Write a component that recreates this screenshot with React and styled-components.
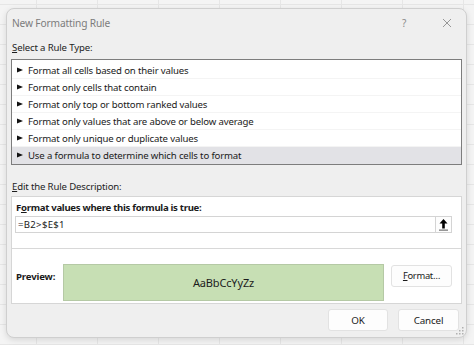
import React from "react";
import styled, { createGlobalStyle } from "styled-components";

const Global = createGlobalStyle`
  html, body { margin: 0; padding: 0; }
  body {
    width: 474px;
    height: 345px;
    overflow: hidden;
    font-family: "Noto Sans", "Open Sans", sans-serif;
    background-color: #f4f4f4;
    background-image:
      linear-gradient(to right, #e6e6e6 1px, transparent 1px),
      linear-gradient(to bottom, #e6e6e6 1px, transparent 1px);
    background-size: 61px 100%, 100% 20px;
    background-position: 36px 0, 0 4px;
  }
`;

const Dialog = styled.div`
  box-sizing: border-box;
  margin: 8px 0 0 6px;
  width: 461px;
  height: 330px;
  background: #efefef;
  border: 1px solid #cfcfcf;
  border-radius: 8px;
  box-shadow: 0 2px 6px rgba(0,0,0,0.12);
  padding: 0 4px 0 4px;
  display: flex;
  flex-direction: column;
  position: relative;
  letter-spacing: -0.15px;
`;

const TitleBar = styled.div`
  height: 30px;
  display: flex;
  align-items: center;
  padding-left: 1px;
  font-size: 10.2px;
  color: #7c7c7c;
`;

const Title = styled.div`
  flex: 1;
  padding-bottom: 3px;
`;

const TitleButton = styled.div`
  width: ${p => p.$w}px;
  margin-right: ${p => p.$mr || 0}px;
  padding-bottom: 3px;
  display: flex;
  justify-content: center;
  color: #8a8a8a;
  font-size: 10px;
`;

const SectionLabel = styled.div`
  height: 17px;
  line-height: 17px;
  font-size: 9.6px;
  color: #1e1e1e;
  padding-left: 1px;
  margin-top: ${p => p.$mt || 0}px;
  margin-bottom: ${p => p.$mb || 0}px;
  u { text-decoration: underline; text-underline-offset: 1px; }
`;

const ListBox = styled.div`
  box-sizing: border-box;
  height: 106px;
  background: #ffffff;
  border: 1px solid #7d7d7d;
  padding-top: 2px;
  display: flex;
  flex-direction: column;
`;

const RuleRow = styled.div`
  height: 17px;
  box-sizing: border-box;
  display: flex;
  align-items: center;
  padding-left: 5px;
  font-size: 9.6px;
  color: #1a1a1a;
  background: ${p => (p.$selected ? "#e2e2e6" : "transparent")};
  border-bottom: 1px solid ${p => (p.$selected ? "transparent" : "#f4f4f4")};
`;

const Marker = styled.svg`
  width: 6px;
  height: 6px;
  margin-right: 5px;
  flex: none;
`;

const DescPanel = styled.div`
  box-sizing: border-box;
  height: 108px;
  background: #ffffff;
  border: 1px solid #d6d6d6;
  display: flex;
  flex-direction: column;
`;

const FormulaBlock = styled.div`
  padding: 2px 9px 0 3px;
  height: 52px;
  border-bottom: 1px solid #d8d8d8;
  box-sizing: border-box;
`;

const BoldLabel = styled.div`
  font-size: 9.6px;
  font-weight: 700;
  color: #1a1a1a;
  height: 17px;
  line-height: 17px;
  padding-left: 1px;
  letter-spacing: -0.3px;
  u { text-decoration: underline; }
`;

const InputRow = styled.div`
  display: flex;
  height: 17px;
  box-sizing: border-box;
  border: 1px solid #d4d4d4;
  background: #fff;
`;

const FormulaInput = styled.div`
  flex: 1;
  font-size: 9.6px;
  line-height: 15px;
  padding-left: 2px;
  color: #1a1a1a;
  letter-spacing: 0.3px;
`;

const CollapseButton = styled.div`
  width: 15px;
  border-left: 1px solid #d4d4d4;
  display: flex;
  align-items: center;
  justify-content: center;
  background: #fdfdfd;
`;

const PreviewRow = styled.div`
  flex: 1;
  display: flex;
  align-items: center;
  padding: 0 9px 1px 4px;
`;

const PreviewLabel = styled.div`
  width: 47px;
  font-size: 9.6px;
  font-weight: 700;
  color: #1a1a1a;
  padding-top: 2px;
`;

const PreviewSwatch = styled.div`
  box-sizing: border-box;
  width: 321px;
  height: 37px;
  margin-top: 13px;
  background: #c7dfb4;
  border: 1px solid #b5c9a5;
  display: flex;
  align-items: center;
  justify-content: center;
  font-size: 11px;
  color: #1c1c1c;
`;

const Spacer = styled.div`
  flex: 1;
`;

const Button = styled.div`
  box-sizing: border-box;
  width: ${p => p.$w || 61}px;
  height: 22px;
  background: #fdfdfd;
  border: 1px solid #e2e2e2;
  border-radius: 3px;
  display: flex;
  align-items: center;
  justify-content: center;
  font-size: ${p => p.$fs || 9.8}px;
  letter-spacing: ${p => p.$ls || -0.15}px;
  color: #1a1a1a;
  u { text-decoration: underline; }
`;

const Footer = styled.div`
  display: flex;
  justify-content: flex-end;
  gap: 10px;
  padding: 5px 3px 0 0;
`;

const Grip = styled.svg`
  position: absolute;
  right: 2px;
  bottom: 2px;
`;

const rules = [
  "Format all cells based on their values",
  "Format only cells that contain",
  "Format only top or bottom ranked values",
  "Format only values that are above or below average",
  "Format only unique or duplicate values",
  "Use a formula to determine which cells to format",
];

export default function App() {
  return (
    <>
      <Global />
      <Dialog>
        <TitleBar>
          <Title>New Formatting Rule</Title>
          <TitleButton $w={16} $mr={20}>?</TitleButton>
          <TitleButton $w={30}>
            <svg width="10" height="10" viewBox="0 0 10 10">
              <path d="M1 1 L9 9 M9 1 L1 9" stroke="#8c8c8c" strokeWidth="0.9" />
            </svg>
          </TitleButton>
        </TitleBar>
        <SectionLabel $mb={3}>
          <u>S</u>elect a Rule Type:
        </SectionLabel>
        <ListBox>
          {rules.map((r, i) => (
            <RuleRow key={i} $selected={i === 5}>
              <Marker viewBox="0 0 6 6">
                <path d="M0 0.5 L6 3 L0 5.5 Z" fill="#111" />
              </Marker>
              {r}
            </RuleRow>
          ))}
        </ListBox>
        <SectionLabel $mt={13} $mb={1}>
          <u>E</u>dit the Rule Description:
        </SectionLabel>
        <DescPanel>
          <FormulaBlock>
            <BoldLabel>
              F<u>o</u>rmat values where this formula is true:
            </BoldLabel>
            <InputRow>
              <FormulaInput>=B2&gt;$E$1</FormulaInput>
              <CollapseButton>
                <svg width="11" height="13" viewBox="0 0 11 13">
                  <path d="M5.5 1 L1.5 5.5 H4.2 V10.5 H6.8 V5.5 H9.5 Z" fill="#000" />
                  <rect x="1" y="11.6" width="9" height="1" fill="#555" />
                </svg>
              </CollapseButton>
            </InputRow>
          </FormulaBlock>
          <PreviewRow>
            <PreviewLabel>Preview:</PreviewLabel>
            <PreviewSwatch>AaBbCcYyZz</PreviewSwatch>
            <Spacer />
            <Button $w={61} $fs={9.4} $ls={-0.3}>
              <u>F</u>ormat…
            </Button>
          </PreviewRow>
        </DescPanel>
        <Footer>
          <Button $w={60}>OK</Button>
          <Button $w={61}>Cancel</Button>
        </Footer>
        <Grip width="8" height="8" viewBox="0 0 8 8">
          <rect x="6" y="0" width="1.5" height="1.5" fill="#b0b0b0" />
          <rect x="3" y="3" width="1.5" height="1.5" fill="#b0b0b0" />
          <rect x="6" y="3" width="1.5" height="1.5" fill="#b0b0b0" />
          <rect x="0" y="6" width="1.5" height="1.5" fill="#b0b0b0" />
          <rect x="3" y="6" width="1.5" height="1.5" fill="#b0b0b0" />
          <rect x="6" y="6" width="1.5" height="1.5" fill="#b0b0b0" />
        </Grip>
      </Dialog>
    </>
  );
}
